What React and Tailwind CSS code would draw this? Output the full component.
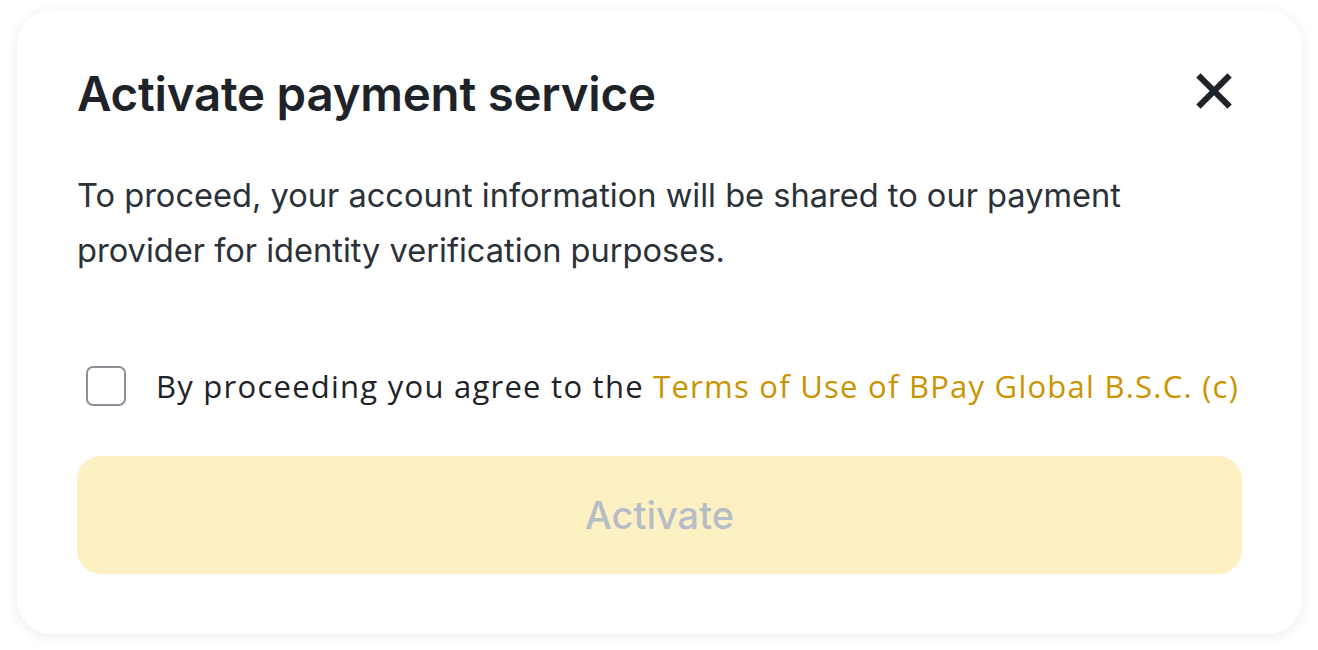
import React from "react";

function CloseIcon() {
    return (
        <svg width="46" height="46" viewBox="0 0 24 24" fill="none">
            <path d="M5 5L19 19M19 5L5 19" stroke="#1E2329" strokeWidth="3.2" strokeLinecap="square" />
        </svg>
    );
}

export default function App() {
    const [checked, setChecked] = React.useState(false);

    return (
        <div className="w-[1318px] h-[650px] bg-white pt-[11px] pl-[17px]" style={{ fontFamily: "Inter, 'Noto Sans', sans-serif" }}>
            <div className="w-[1285px] h-[623px] rounded-[34px] bg-white shadow-[0_2px_14px_rgba(0,0,0,0.08)] px-[60px] pt-[53px]">
                <div className="flex items-center justify-between h-[60px]">
                    <h1 className="text-[47.4px] font-semibold text-[#1E2329] tracking-[-0.2px]">Activate payment service</h1>
                    <button className="mr-[5px] -mt-[6px]">
                        <CloseIcon />
                    </button>
                </div>
                <p className="mt-[44px] text-[32.6px] leading-[55px] text-[#2B3139] w-[1150px]">
                    To proceed, your account information will be shared to our payment provider for identity verification purposes.
                </p>
                <label className="mt-[88px] flex items-center h-[40px] pl-[9px]">
                    <input type="checkbox" checked={checked} onChange={() => setChecked(!checked)} className="sr-only" />
                    <span className="w-[40px] h-[40px] rounded-[7px] border-[2.5px] border-[#8C9098] bg-white"></span>
                    <span className="ml-[30px] text-[31px] font-medium tracking-[1.25px] text-[#1E2329] whitespace-nowrap" style={{ fontFamily: "'Open Sans', Lato, sans-serif" }}>
                        By proceeding you agree to the <span className="text-[#C99400]">Terms of Use of BPay Global B.S.C. (c)</span>
                    </span>
                </label>
                <button className="mt-[50px] w-full h-[118px] rounded-[24px] bg-[#FDF1C3] text-[38px] font-medium text-[#B7BDC6]">
                    Activate
                </button>
            </div>
        </div>
    );
}
